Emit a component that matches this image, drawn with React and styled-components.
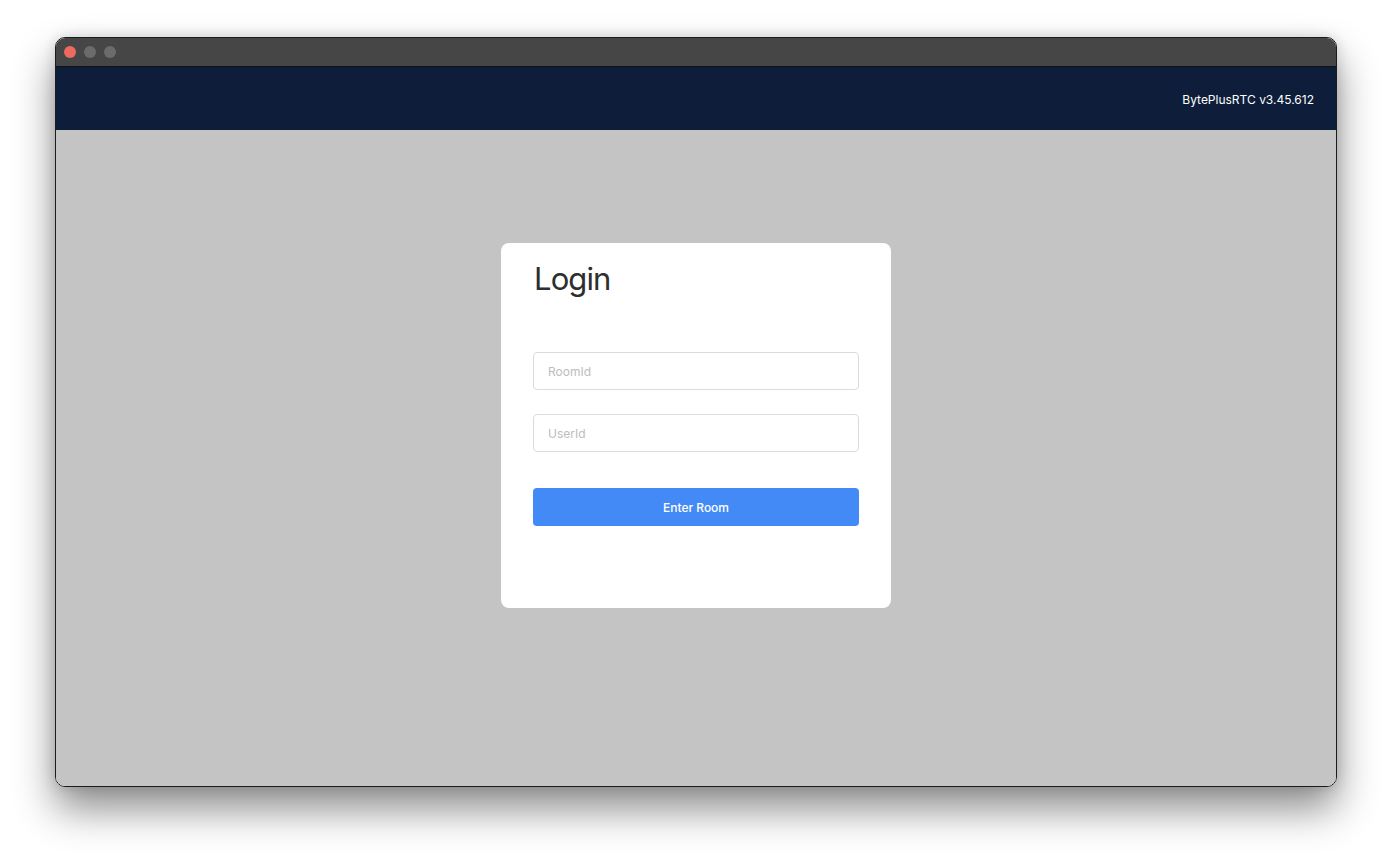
import styled, { createGlobalStyle } from "styled-components";

const GlobalStyle = createGlobalStyle`
    html, body {
        margin: 0;
        padding: 0;
        background: #ffffff;
        font-family: Inter, "Noto Sans", sans-serif;
    }
`;

function TrafficLights() {
    return (
        <Lights>
            <Light color="#ed6a5e" />
            <Light color="#6b6b6b" />
            <Light color="#6b6b6b" />
        </Lights>
    );
}

function LoginCard() {
    return (
        <Card>
            <Title>Login</Title>
            <Form>
                <Field placeholder="RoomId" />
                <Field placeholder="UserId" />
                <EnterButton>Enter Room</EnterButton>
            </Form>
        </Card>
    );
}

export default function App() {
    return (
        <Page>
            <GlobalStyle />
            <Window>
                <TitleBar>
                    <TrafficLights />
                </TitleBar>
                <Header>
                    <Version>BytePlusRTC v3.45.612</Version>
                </Header>
                <Content>
                    <LoginCard />
                </Content>
            </Window>
        </Page>
    );
}

const Page = styled.div`
    width: 1392px;
    height: 860px;
    padding: 37px 0 0 55px;
    box-sizing: border-box;
    overflow: hidden;
`;

const Window = styled.div`
    width: 1282px;
    height: 750px;
    box-sizing: border-box;
    border: 1px solid #1c1c1c;
    border-radius: 10px;
    overflow: hidden;
    display: flex;
    flex-direction: column;
    box-shadow: 0 22px 40px rgba(0, 0, 0, 0.45), 0 0 14px rgba(0, 0, 0, 0.15);
`;

const TitleBar = styled.div`
    height: 28px;
    background: #464646;
    border-bottom: 1px solid #111;
    display: flex;
    align-items: center;
    padding-left: 8px;
    flex-shrink: 0;
`;

const Lights = styled.div`
    display: flex;
    gap: 8px;
`;

const Light = styled.span`
    width: 12px;
    height: 12px;
    border-radius: 50%;
    background: ${p => p.color};
`;

const Header = styled.div`
    height: 63px;
    background: #0e1e3a;
    display: flex;
    align-items: center;
    justify-content: flex-end;
    padding-right: 22px;
    flex-shrink: 0;
`;

const Version = styled.span`
    color: #ffffff;
    font-size: 12px;
    padding-top: 1px;
`;

const Content = styled.div`
    flex: 1;
    background: #c4c4c4;
    display: flex;
    justify-content: center;
    align-items: flex-start;
    padding-top: 113px;
`;

const Card = styled.div`
    width: 390px;
    height: 365px;
    box-sizing: border-box;
    background: #ffffff;
    border-radius: 8px;
    padding: 17px 32px 0;
`;

const Title = styled.h1`
    margin: 0;
    font-size: 31px;
    font-weight: 400;
    letter-spacing: -0.9px;
    color: #2e2e2e;
    line-height: 37px;
    padding-left: 1px;
`;

const Form = styled.div`
    margin-top: 55px;
    display: flex;
    flex-direction: column;
`;

const Field = styled.input`
    height: 38px;
    box-sizing: border-box;
    border: 1px solid #dcdcdc;
    border-radius: 4px;
    padding: 0 14px;
    font-family: Inter, "Noto Sans", sans-serif;
    font-size: 12px;
    color: #333;
    outline: none;
    margin-bottom: 24px;

    &::placeholder {
        color: #bdbdbd;
    }
`;

const EnterButton = styled.button`
    height: 38px;
    margin-top: 12px;
    border: none;
    border-radius: 4px;
    background: #448af7;
    color: #ffffff;
    font-family: Inter, "Noto Sans", sans-serif;
    font-size: 12px;
    font-weight: 500;
    cursor: pointer;
`;
